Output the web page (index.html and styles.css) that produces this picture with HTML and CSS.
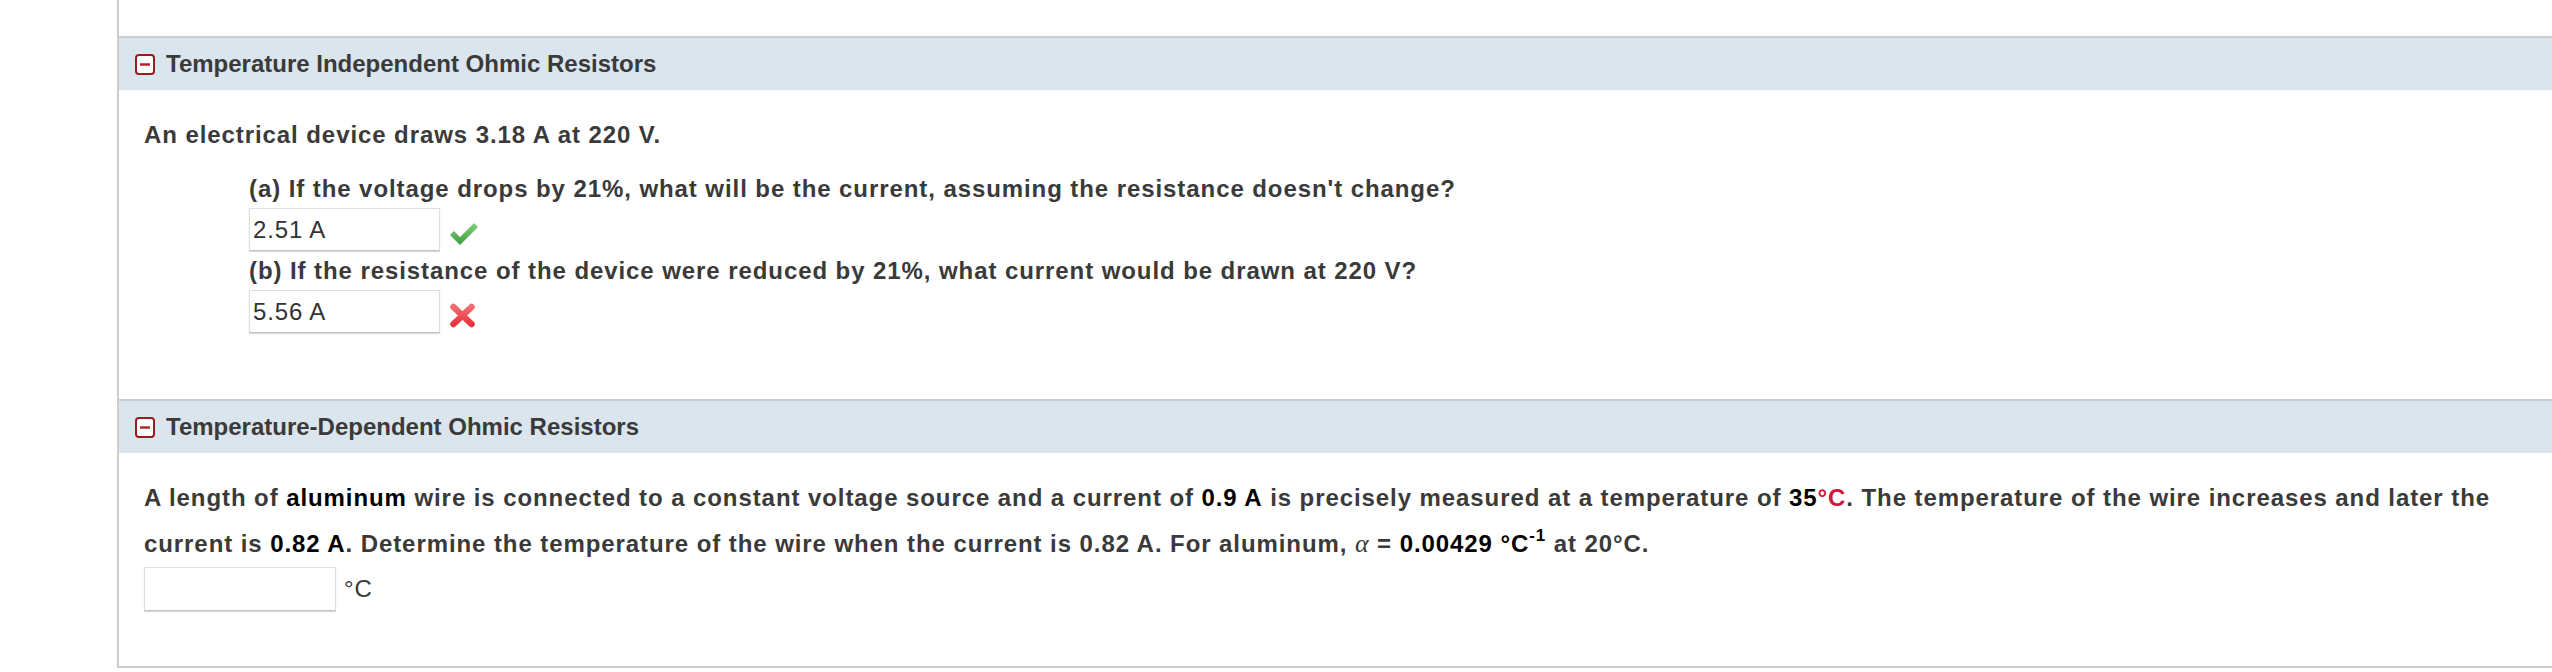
FILE: index.html
```html
<!DOCTYPE html>
<html lang="en">
<head>
    <meta charset="UTF-8">
    <title>Ohmic Resistors</title>
    <link rel="stylesheet" href="styles.css">
</head>
<body>
    <div class="page">
        <!-- part 1 -->
        <div class="section">
            <div class="section-head">
                <svg class="toggle" width="20" height="21" viewBox="0 0 20 21"><rect x="1" y="1" width="18" height="19" rx="3" fill="#fff" stroke="#9b1b20" stroke-width="2"/><line x1="5" y1="10.5" x2="15" y2="10.5" stroke="#b42429" stroke-width="2.5"/></svg>
                <span class="title">Temperature Independent Ohmic Resistors</span>
            </div>
            <div class="section-body first">
                <p class="intro">An electrical device draws 3.18 A at 220 V.</p>
                <div class="parts">
                    <p class="q">(a) If the voltage drops by 21%, what will be the current, assuming the resistance doesn't change?</p>
                    <div class="answer">
                        <input type="text" value="2.51 A" readonly>
                        <svg class="mark" width="30" height="24" viewBox="0 0 30 24">
                            <defs><linearGradient id="ok" x1="0" y1="0" x2="0" y2="1"><stop offset="0" stop-color="#86cf7f"/><stop offset="1" stop-color="#3d9b3f"/></linearGradient></defs>
                            <path d="M1 13 L5 9 L11 15 L25 1 L29 5 L11 23 Z" fill="url(#ok)"/>
                        </svg>
                    </div>
                    <p class="q">(b) If the resistance of the device were reduced by 21%, what current would be drawn at 220 V?</p>
                    <div class="answer">
                        <input type="text" value="5.56 A" readonly>
                        <svg class="mark" width="27" height="25" viewBox="0 0 27 25">
                            <defs><linearGradient id="bad" x1="0" y1="0" x2="0" y2="1"><stop offset="0" stop-color="#f56b72"/><stop offset="1" stop-color="#e8343d"/></linearGradient></defs>
                            <path d="M4.5 4 L22.5 21 M22.5 4 L4.5 21" stroke="url(#bad)" stroke-width="6.5" stroke-linecap="round" fill="none"/>
                        </svg>
                    </div>
                </div>
            </div>
        </div>

        <!-- part 2 -->
        <div class="section">
            <div class="section-head">
                <svg class="toggle" width="20" height="21" viewBox="0 0 20 21"><rect x="1" y="1" width="18" height="19" rx="3" fill="#fff" stroke="#9b1b20" stroke-width="2"/><line x1="5" y1="10.5" x2="15" y2="10.5" stroke="#b42429" stroke-width="2.5"/></svg>
                <span class="title">Temperature-Dependent Ohmic Resistors</span>
            </div>
            <div class="section-body second">
                <p class="text">A length of <b>aluminum</b> wire is connected to a constant voltage source and a current of <b>0.9 A</b> is precisely measured at a temperature of <b>35</b><b class="red">°C</b>. The temperature of the wire increases and later the<br>current is <b>0.82 A</b>. Determine the temperature of the wire when the current is 0.82 A. For aluminum, <i class="alpha">α</i> = <b>0.00429 °C<sup>-1</sup></b> at 20°C.</p>
                <div class="answer unit">
                    <input type="text" value="">
                    <span class="unit-label">°C</span>
                </div>
            </div>
        </div>
    </div>
</body>
</html>
```

FILE: styles.css
```css
* {
    margin: 0;
    padding: 0;
}
body {
    font-family: "Liberation Sans", Arial, sans-serif;
    color: #3a3a3a;
    background: #fff;
}
.page {
    margin-left: 117px;
    padding-top: 36px;
    border-left: 2px solid #cccccc;
    border-bottom: 2px solid #cccccc;
}
.section-head {
    display: flex;
    align-items: center;
    height: 52px;
    padding-left: 16px;
    border-top: 2px solid #cccccc;
    background-color: #dae5ee;
}
.toggle {
    display: block;
    margin-right: 11px;
}
.title {
    font-size: 24px;
    line-height: 28px;
    font-weight: bold;
}
.section-body {
    padding-left: 25px;
    padding-right: 27px;
}
.section-body.first {
    padding-bottom: 66px;
}
.section-body.second {
    padding-bottom: 55px;
}
.intro,
.q,
.text {
    font-size: 24px;
    line-height: 28px;
    font-weight: bold;
    letter-spacing: 0.92px;
}
.intro {
    margin-top: 31px;
}
.parts {
    margin-left: 105px;
    margin-top: 26px;
}
.answer + .q {
    margin-top: 6px;
}
.answer {
    display: flex;
    align-items: flex-end;
    margin-top: 5px;
}
.answer input {
    box-sizing: border-box;
    width: 191px;
    height: 43px;
    padding: 0 3px;
    border: 1px solid #dedede;
    border-bottom-color: #c4c4c4;
    box-shadow: 0 1px 1px rgba(0, 0, 0, 0.15);
    font-family: "Liberation Sans", Arial, sans-serif;
    font-size: 24px;
    letter-spacing: 0.85px;
    color: #333;
    background: #fff;
    outline: none;
}
.mark {
    display: block;
    margin-left: 9px;
    margin-bottom: 5px;
}
.text {
    margin-top: 26px;
    line-height: 38px;
}
.text b {
    color: #000;
}
.text b.red {
    color: #d4143b;
}
.text sup {
    font-size: 17px;
    line-height: 37px;
    vertical-align: 11px;
}
.alpha {
    font-family: "Liberation Serif", "DejaVu Serif", serif;
    font-weight: normal;
    font-size: 26px;
}
.answer.unit {
    align-items: center;
    margin-top: 4px;
}
.answer.unit input {
    width: 192px;
    height: 44px;
}
.unit-label {
    margin-left: 8px;
    font-size: 24px;
    line-height: 28px;
    letter-spacing: 0.85px;
}
```
